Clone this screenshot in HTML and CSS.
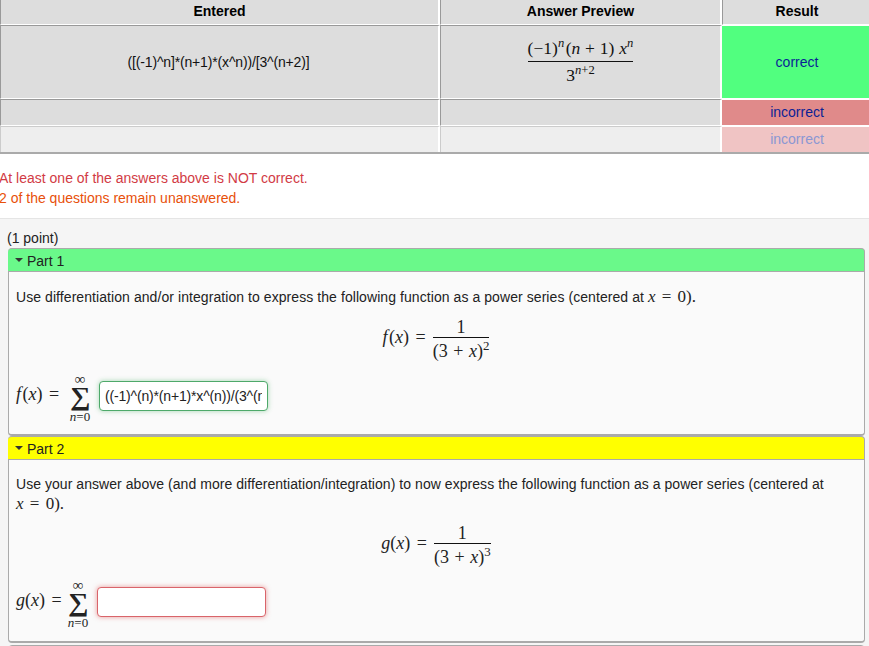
FILE: index.html
```html
<!DOCTYPE html>
<html lang="en">
<head>
<meta charset="utf-8">
<title>Attempt results</title>
<link rel="stylesheet" href="styles.css">
</head>
<body>
<table class="results">
  <colgroup><col class="c1"><col class="c2"><col class="c3"></colgroup>
  <tr class="head"><th>Entered</th><th>Answer Preview</th><th>Result</th></tr>
  <tr class="r1">
    <td class="entered">([(-1)^n]*(n+1)*(x^n))/[3^(n+2)]</td>
    <td>
      <span class="math frac preview">
        <span class="num">(−1)<sup><i>n</i></sup>&#8202;(<i>n</i> + 1) <i>x</i><sup><i>n</i></sup></span>
        <span class="den">3<sup><i>n</i>+2</sup></span>
      </span>
    </td>
    <td class="ok">correct</td>
  </tr>
  <tr class="r2"><td></td><td></td><td class="bad">incorrect</td></tr>
  <tr class="r3"><td></td><td></td><td class="bad2"><span class="faded">incorrect</span></td></tr>
</table>

<div class="messages">
  <p class="msg-red">At least one of the answers above is NOT correct.</p>
  <p class="msg-orange">2 of the questions remain unanswered.</p>
</div>

<section class="problem">
  <div class="points">(1 point)</div>

  <div class="part">
    <div class="part-head green"><span class="caret"></span>Part 1</div>
    <div class="part-body">
      <p class="text text-a">Use differentiation and/or integration to express the following function as a power series (centered at <span class="math"><i>x</i> = 0).</span></p>
      <div class="display display-a">
        <span class="math lead"><i>f</i>&#8202;(<i>x</i>) =</span>
        <span class="math frac"><span class="num">1</span><span class="den">(3 + <i>x</i>)<sup>2</sup></span></span>
      </div>
      <div class="answer">
        <span class="math lhs lhs-f"><i>f</i>&#8202;(<i>x</i>) =</span>
        <span class="math sum"><span class="lim inf">∞</span><span class="sigma">∑</span><span class="lim"><i>n</i>=0</span></span>
        <input class="field good" type="text" value="((-1)^(n)*(n+1)*x^(n))/(3^(n+2))">
      </div>
    </div>
  </div>

  <div class="part">
    <div class="part-head yellow"><span class="caret"></span>Part 2</div>
    <div class="part-body body-two">
      <p class="text">Use your answer above (and more differentiation/integration) to now express the following function as a power series (centered at <span class="math"><i>x</i> = 0).</span></p>
      <div class="display display-b">
        <span class="math lead"><i>g</i>(<i>x</i>) =</span>
        <span class="math frac"><span class="num">1</span><span class="den">(3 + <i>x</i>)<sup>3</sup></span></span>
      </div>
      <div class="answer">
        <span class="math lhs lhs-g"><i>g</i>(<i>x</i>) =</span>
        <span class="math sum"><span class="lim inf">∞</span><span class="sigma">∑</span><span class="lim"><i>n</i>=0</span></span>
        <input class="field wrong" type="text" value="">
      </div>
    </div>
  </div>

  <div class="part-next"></div>
</section>
</body>
</html>
```
FILE: styles.css
```css
html, body {
  margin: 0;
  padding: 0;
  height: 646px;
  overflow: hidden;
  background: #fff;
}
body {
  font-family: "Liberation Sans", Arial, sans-serif;
  font-size: 14px;
  color: #222;
}

/* results table */
.results {
  border-collapse: separate;
  border-spacing: 0;
  table-layout: fixed;
  width: 869px;
  border-bottom: 2px solid #aaa;
}
.c1 { width: 440px; }
.c2 { width: 282px; }
.c3 { width: 147px; }
.results th, .results td {
  padding: 0;
  text-align: center;
  vertical-align: middle;
  background: #ddd;
  border-right: 2px solid #fff;
  border-bottom: 1px solid #fff;
  border-left: 1px solid #999;
  box-sizing: border-box;
  color: #111;
}
.results td:last-child, .results th:last-child { border-right: 0; }
.results th {
  height: 25px;
  font-weight: bold;
  font-size: 14px;
  color: #000;
  border-top: 0;
  padding-bottom: 2px;
}
.results th:last-child { padding-left: 2px; }
.results td { border-top: 1px solid #999; }
.results td.entered { letter-spacing: -.16px; padding-right: 2px; }
.r1 td { height: 74px; }
.r2 td { height: 27px; }
.r3 td { height: 26px; background: #eee; border-top-color: #ccc; border-left-color: #ccc; border-bottom: 0; }
.results td.ok { background: #51ff7f; color: #0a1f96; border-top: 1px solid #fff; border-left: 0; padding-left: 3px; }
.results td.bad { background: #e08a8a; color: #0a1f96; border-top: 1px solid #fff; border-left: 0; padding: 0 0 2px 3px; }
.results td.bad2 { background: #f0c4c4; border-top: 1px solid #fff; border-left: 0; padding: 0 0 2px 3px; }
.faded { color: #8b97d3; }

/* math */
.math { font-family: "Liberation Serif", "Times New Roman", serif; }
.math sup { font-size: 72%; line-height: 0; }
.frac {
  display: inline-flex;
  flex-direction: column;
  align-items: stretch;
  text-align: center;
  vertical-align: middle;
}
.frac .num { border-bottom: 1px solid #111; line-height: 20px; }
.frac .den { line-height: 20px; padding-top: 3px; word-spacing: 1px; }
.preview { font-size: 17.5px; color: #111; margin-top: -1px; word-spacing: .5px; }
.preview .num { line-height: 22px; padding-bottom: 2px; }
.preview .den { line-height: 22px; padding-top: 2px; }

/* messages */
.messages { height: 50px; padding-top: 14px; }
.messages p { margin: 0; line-height: 20px; margin-left: -1px; }
.msg-red { color: #d23b45; }
.msg-orange { color: #e8500a; }

/* problem */
.problem {
  height: 429px;
  background: #f5f5f5;
  border-top: 1px solid #e5e5e5;
  padding: 10px 4px 0 8px;
  box-sizing: border-box;
  overflow: hidden;
}
.points { line-height: 18px; height: 19px; margin-left: -1px; }
.part-head {
  height: 24px;
  line-height: 24px;
  box-sizing: border-box;
  border-top: 1px solid #aaa;
  border-right: 1px solid #aaa;
  border-bottom: 1px solid #aaa;
  padding-left: 19px;
  position: relative;
  color: #222;
}
.green { background: #6af98a; border-radius: 4px 4px 0 0; }
.yellow { background: #ffff00; border-radius: 4px 4px 0 0; }
.caret {
  position: absolute;
  left: 7px;
  top: 9px;
  width: 0;
  height: 0;
  border-left: 4px solid transparent;
  border-right: 4px solid transparent;
  border-top: 4px solid #333;
}
.part-body {
  background: #fafafa;
  border-left: 1px solid #aaa;
  border-right: 1px solid #aaa;
  border-bottom: 2px solid #aaa;
  border-radius: 0 0 4px 4px;
  height: 164px;
  box-sizing: border-box;
  padding: 15px 7px 0;
}
.body-two { height: 183px; padding-top: 14px; margin-bottom: 2px; }
.text { margin: 0; line-height: 20px; letter-spacing: .05px; }
.text-a { letter-spacing: .07px; }
.text .math { font-size: 17px; word-spacing: 2px; white-space: nowrap; letter-spacing: 0; }
.display {
  display: flex;
  justify-content: center;
  align-items: center;
  gap: 7px;
  font-size: 18px;
  padding-right: 1px;
  word-spacing: 2px;
}
.lead { margin-bottom: 4px; }
.display-a { margin-top: 8px; height: 48px; }
.display-b { margin-top: 7px; height: 48px; }
.answer {
  display: flex;
  align-items: center;
  font-size: 18px;
  margin-top: 8px;
  height: 50px;
  word-spacing: 2px;
}
.lhs { margin-bottom: 4px; white-space: nowrap; }
.lhs-f { width: 49px; }
.lhs-g { width: 47px; }
.sum {
  display: flex;
  flex-direction: column;
  align-items: center;
  width: 30px;
  margin-top: 4px;
  margin-right: 4px;
}
.lim { font-size: 13px; line-height: 11px; word-spacing: 0; }
.lim.inf { font-size: 15px; line-height: 8px; }
.sigma { font-size: 26px; line-height: 28px; font-weight: bold; transform: scaleX(1.1); }
.field {
  width: 169px;
  height: 30px;
  margin-top: -1px;
  box-sizing: border-box;
  padding: 0 5px;
  background: #fff;
  border-radius: 4px;
  font-family: "Liberation Sans", Arial, sans-serif;
  font-size: 14px;
  letter-spacing: -.17px;
  color: #222;
  outline: 0;
}
.good { border: 1px solid #4ea96a; box-shadow: 0 0 5px rgba(60, 170, 90, .45); }
.wrong { border: 1px solid #d9646a; box-shadow: 0 0 5px rgba(220, 60, 60, .5); }
.part-next {
  height: 6px;
  border: 1px solid #aaa;
  border-radius: 4px 4px 0 0;
  background: #ddd;
}
```
